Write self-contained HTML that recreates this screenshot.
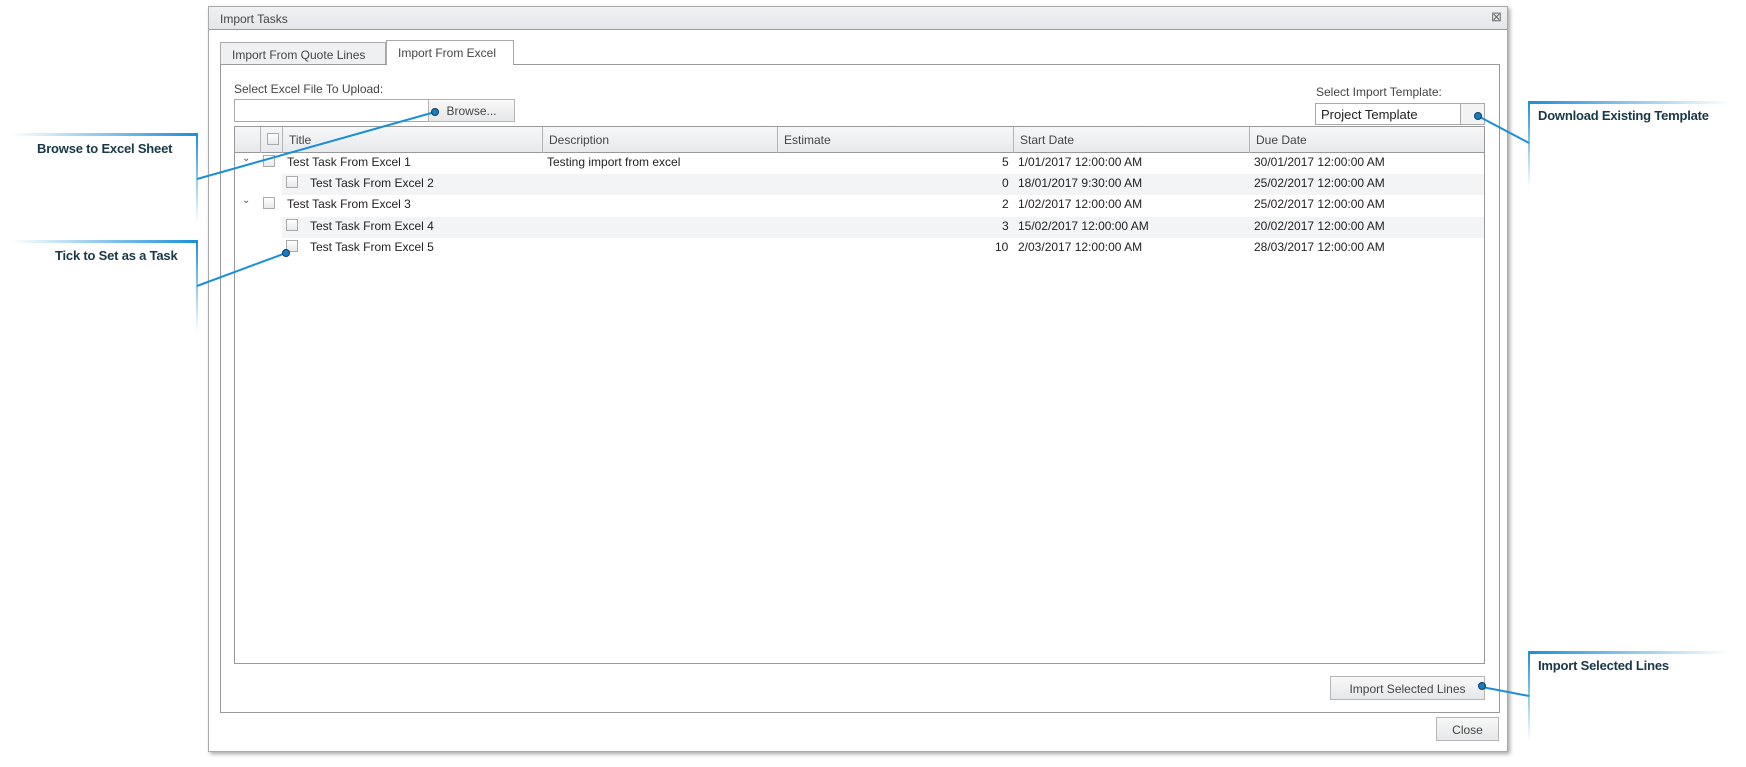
<!DOCTYPE html>
<html><head><meta charset="utf-8"><style>
*{box-sizing:border-box;margin:0;padding:0}
body{width:1746px;height:767px;background:#fff;position:relative;overflow:hidden;font-family:"Liberation Sans",sans-serif;font-size:12px;color:#333}
.a{position:absolute}
.dlg{left:208px;top:6px;width:1300px;height:746px;border:1px solid #a9a9a9;background:#fff;box-shadow:2px 2px 4px rgba(0,0,0,.35)}
.tb{left:0;top:0;width:100%;height:23px;background:linear-gradient(#f0f1f3,#e4e6e9);border-bottom:1px solid #999}
.tab{height:24px;border:1px solid #a9a9a9;background:#eef0f2;padding:5px 11px;color:#444}
.panel{border:1px solid #999;background:#fff}
.grid{border:1px solid #999;background:#fff;overflow:hidden}
.hd{background:linear-gradient(#f6f7f8,#e7e9ec);border-bottom:1px solid #999;height:26px}
.hc{top:0;height:26px;border-left:1px solid #b5b5b5;padding:6px 6px;color:#444}
.cb{width:12px;height:12px;border:1px solid #aaa;background:linear-gradient(#fff,#e8e8e8)}
.row{height:21px;left:0;width:100%}
.t{white-space:nowrap;color:#222}
.btn{border:1px solid #b5b5b5;background:linear-gradient(#f8f8f8,#e6e7e9);color:#444;text-align:center}
.cl{font-weight:bold;color:#183848;font-size:13px;white-space:nowrap;letter-spacing:-0.2px}
.vl{width:2px;background:linear-gradient(#1a8fd8,rgba(26,143,216,0))}
.hl{height:3px;background:linear-gradient(90deg,rgba(26,143,216,0),#1a8fd8)}
.hr{height:3px;background:linear-gradient(90deg,#1a8fd8,rgba(26,143,216,0))}
</style></head><body>
<div class="a dlg">
 <div class="a tb"></div>
 <div class="a" style="left:11px;top:5px;color:#444">Import Tasks</div>
 <div class="a" style="left:1282px;top:2px;font-size:13px;color:#666">⊠</div>
 <div class="a tab" style="left:11px;top:35px;width:166px;height:23px">Import From Quote Lines</div>
 <div class="a tab" style="left:177px;top:33px;width:128px;height:26px;background:#fff;border-bottom:none">Import From Excel</div>
 <div class="a panel" style="left:11px;top:57px;width:1280px;height:649px"></div>
 <div class="a" style="left:178px;top:57px;width:126px;height:2px;background:#fff"></div>
 <div class="a" style="left:25px;top:75px;color:#444">Select Excel File To Upload:</div>
 <div class="a" style="left:25px;top:92px;width:195px;height:23px;border:1px solid #aaa"></div>
 <div class="a btn" style="left:219px;top:92px;width:87px;height:23px;padding-top:4px">Browse...</div>
 <div class="a" style="left:1107px;top:78px;color:#444">Select Import Template:</div>
 <div class="a" style="left:1106px;top:96px;width:170px;height:22px;border:1px solid #aaa;padding:3px 5px;font-size:13px;color:#222">Project Template</div>
 <div class="a" style="left:1251px;top:96px;width:25px;height:22px;border:1px solid #aaa;background:#f3f3f3"></div>
 <div class="a grid" style="left:25px;top:119px;width:1251px;height:538px">
  <div class="a hd" style="left:0;top:0;width:100%"></div>
  <div class="a hc" style="left:25px;width:23px"><div class="cb"></div></div>
  <div class="a hc" style="left:47px">Title</div>
  <div class="a hc" style="left:307px">Description</div>
  <div class="a hc" style="left:542px">Estimate</div>
  <div class="a hc" style="left:778px">Start Date</div>
  <div class="a hc" style="left:1014px">Due Date</div>
  <div class="a row" style="top:47px;left:47px;width:1202px;background:#f3f4f5"></div>
  <div class="a row" style="top:90px;left:47px;width:1202px;background:#f3f4f5"></div>
 </div>
</div>
<div class="a" style="left:234px;top:125px;width:1251px;height:140px">
 <div class="a" style="left:8px;top:28px;color:#555;font-size:10px">⌄</div>
 <div class="a cb" style="left:29px;top:30px"></div>
 <div class="a t" style="left:53px;top:30px">Test Task From Excel 1</div>
 <div class="a t" style="left:313px;top:30px">Testing import from excel</div>
 <div class="a t" style="left:768px;top:30px">5</div>
 <div class="a t" style="left:784px;top:30px">1/01/2017 12:00:00 AM</div>
 <div class="a t" style="left:1020px;top:30px">30/01/2017 12:00:00 AM</div>

 <div class="a cb" style="left:52px;top:51px"></div>
 <div class="a t" style="left:76px;top:51px">Test Task From Excel 2</div>
 <div class="a t" style="left:768px;top:51px">0</div>
 <div class="a t" style="left:784px;top:51px">18/01/2017 9:30:00 AM</div>
 <div class="a t" style="left:1020px;top:51px">25/02/2017 12:00:00 AM</div>

 <div class="a" style="left:8px;top:70px;color:#555;font-size:10px">⌄</div>
 <div class="a cb" style="left:29px;top:72px"></div>
 <div class="a t" style="left:53px;top:72px">Test Task From Excel 3</div>
 <div class="a t" style="left:768px;top:72px">2</div>
 <div class="a t" style="left:784px;top:72px">1/02/2017 12:00:00 AM</div>
 <div class="a t" style="left:1020px;top:72px">25/02/2017 12:00:00 AM</div>

 <div class="a cb" style="left:52px;top:94px"></div>
 <div class="a t" style="left:76px;top:94px">Test Task From Excel 4</div>
 <div class="a t" style="left:768px;top:94px">3</div>
 <div class="a t" style="left:784px;top:94px">15/02/2017 12:00:00 AM</div>
 <div class="a t" style="left:1020px;top:94px">20/02/2017 12:00:00 AM</div>

 <div class="a cb" style="left:52px;top:115px"></div>
 <div class="a t" style="left:76px;top:115px">Test Task From Excel 5</div>
 <div class="a t" style="left:761px;top:115px">10</div>
 <div class="a t" style="left:784px;top:115px">2/03/2017 12:00:00 AM</div>
 <div class="a t" style="left:1020px;top:115px">28/03/2017 12:00:00 AM</div>
</div>
<div class="a btn" style="left:1330px;top:676px;width:155px;height:24px;padding-top:5px">Import Selected Lines</div>
<div class="a btn" style="left:1436px;top:717px;width:63px;height:24px;padding-top:5px">Close</div>

<div class="a hl" style="left:11px;top:133px;width:186px"></div>
<div class="a vl" style="left:196px;top:133px;height:90px"></div>
<div class="a cl" style="left:37px;top:141px">Browse to Excel Sheet</div>
<div class="a hl" style="left:11px;top:240px;width:186px"></div>
<div class="a vl" style="left:196px;top:240px;height:92px"></div>
<div class="a cl" style="left:55px;top:248px">Tick to Set as a Task</div>
<div class="a hr" style="left:1529px;top:101px;width:200px"></div>
<div class="a vl" style="left:1528px;top:101px;height:86px"></div>
<div class="a cl" style="left:1538px;top:108px">Download Existing Template</div>
<div class="a hr" style="left:1529px;top:651px;width:200px"></div>
<div class="a vl" style="left:1528px;top:651px;height:90px"></div>
<div class="a cl" style="left:1538px;top:658px">Import Selected Lines</div>
<svg class="a" style="left:0;top:0" width="1746" height="767">
 <g stroke="#1a8fd8" stroke-width="2" fill="none">
  <line x1="197" y1="179" x2="435" y2="112"/>
  <line x1="197" y1="286" x2="286" y2="253"/>
  <line x1="1478" y1="116" x2="1529" y2="143"/>
  <line x1="1482" y1="687" x2="1529" y2="696"/>
 </g>
 <g fill="#1a7cc0" stroke="#0d3e66" stroke-width="1">
  <circle cx="435" cy="112" r="3.5"/><circle cx="286" cy="253" r="3.5"/>
  <circle cx="1478" cy="116" r="3.5"/><circle cx="1482" cy="686" r="3.5"/>
 </g>
</svg>
</body></html>
